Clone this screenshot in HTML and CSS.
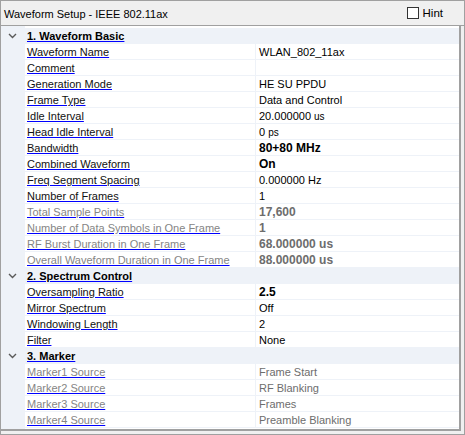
FILE: index.html
```html
<!DOCTYPE html>
<html>
<head>
<meta charset="utf-8">
<link rel="stylesheet" href="styles.css">
</head>
<body>
<div class="window">
  <div class="titlebar">
    <span class="title">Waveform Setup - IEEE 802.11ax</span>
    <label class="hint"><span class="box"></span><span>Hint</span></label>
  </div>
  <div class="grid">
    <div class="row cat"><span class="gut"><svg width="9" height="6" viewBox="0 0 9 6"><polyline points="1,1 4.5,4.5 8,1" fill="none" stroke="#5a5a5a" stroke-width="1.4"/></svg></span><span class="name"><u>1. Waveform Basic</u></span></div>
    <div class="row"><span class="gut"></span><span class="name"><u>Waveform Name</u></span><span class="val">WLAN_802_11ax</span></div>
    <div class="row"><span class="gut"></span><span class="name"><u>Comment</u></span><span class="val"></span></div>
    <div class="row"><span class="gut"></span><span class="name"><u>Generation Mode</u></span><span class="val">HE SU PPDU</span></div>
    <div class="row"><span class="gut"></span><span class="name"><u>Frame Type</u></span><span class="val">Data and Control</span></div>
    <div class="row"><span class="gut"></span><span class="name"><u>Idle Interval</u></span><span class="val">20.000000 <small>us</small></span></div>
    <div class="row"><span class="gut"></span><span class="name"><u>Head Idle Interval</u></span><span class="val">0 <small>ps</small></span></div>
    <div class="row"><span class="gut"></span><span class="name"><u>Bandwidth</u></span><span class="val bold">80+80 MHz</span></div>
    <div class="row"><span class="gut"></span><span class="name"><u>Combined Waveform</u></span><span class="val bold">On</span></div>
    <div class="row"><span class="gut"></span><span class="name"><u>Freq Segment Spacing</u></span><span class="val">0.000000 Hz</span></div>
    <div class="row"><span class="gut"></span><span class="name"><u>Number of Frames</u></span><span class="val">1</span></div>
    <div class="row ro"><span class="gut"></span><span class="name"><u>Total Sample Points</u></span><span class="val bold">17,600</span></div>
    <div class="row ro"><span class="gut"></span><span class="name"><u>Number of Data Symbols in One Frame</u></span><span class="val bold">1</span></div>
    <div class="row ro"><span class="gut"></span><span class="name"><u>RF Burst Duration in One Frame</u></span><span class="val bold">68.000000 us</span></div>
    <div class="row ro"><span class="gut"></span><span class="name"><u>Overall Waveform Duration in One Frame</u></span><span class="val bold">88.000000 us</span></div>
    <div class="row cat"><span class="gut"><svg width="9" height="6" viewBox="0 0 9 6"><polyline points="1,1 4.5,4.5 8,1" fill="none" stroke="#5a5a5a" stroke-width="1.4"/></svg></span><span class="name"><u>2. Spectrum Control</u></span></div>
    <div class="row"><span class="gut"></span><span class="name"><u>Oversampling Ratio</u></span><span class="val bold">2.5</span></div>
    <div class="row"><span class="gut"></span><span class="name"><u>Mirror Spectrum</u></span><span class="val">Off</span></div>
    <div class="row"><span class="gut"></span><span class="name"><u>Windowing Length</u></span><span class="val">2</span></div>
    <div class="row"><span class="gut"></span><span class="name"><u>Filter</u></span><span class="val">None</span></div>
    <div class="row cat"><span class="gut"><svg width="9" height="6" viewBox="0 0 9 6"><polyline points="1,1 4.5,4.5 8,1" fill="none" stroke="#5a5a5a" stroke-width="1.4"/></svg></span><span class="name"><u>3. Marker</u></span></div>
    <div class="row ro"><span class="gut"></span><span class="name"><u>Marker1 Source</u></span><span class="val">Frame Start</span></div>
    <div class="row ro"><span class="gut"></span><span class="name"><u>Marker2 Source</u></span><span class="val">RF Blanking</span></div>
    <div class="row ro"><span class="gut"></span><span class="name"><u>Marker3 Source</u></span><span class="val">Frames</span></div>
    <div class="row ro"><span class="gut"></span><span class="name"><u>Marker4 Source</u></span><span class="val">Preamble Blanking</span></div>
  </div>
</div>
</body>
</html>
```
FILE: styles.css
```css
* { box-sizing: border-box; }
html, body { margin: 0; padding: 0; background: #ffffff; }
body {
  font-family: "Liberation Sans", Arial, sans-serif;
  font-size: 11px;
  color: #000;
}
.window {
  width: 465px;
  height: 435px;
  border: 1px solid #a0a0a0;
  background: #f0f0f0;
  display: flex;
  flex-direction: column;
}
.titlebar {
  height: 25px;
  flex: none;
  border-bottom: 1px solid #a0a0a0;
  display: flex;
  align-items: center;
  justify-content: space-between;
  padding: 0 0 0 3px;
  font-size: 11px;
}
.title { padding-top: 1px; }
.hint {
  display: flex;
  align-items: center;
  gap: 4px;
  margin-right: 21px;
  font-size: 11.5px;
}
.box {
  width: 12px;
  height: 12px;
  border: 1px solid #333;
  background: #fff;
}
.grid {
  flex: none;
  height: 405px;
  margin: 0 3px 3px 0;
  border-right: 2px solid #a0a0a0;
  border-bottom: 2px solid #a0a0a0;
  padding-top: 2px;
  background: linear-gradient(to right, #eef2f8 24px, #ffffff 24px);
}
.row {
  display: flex;
  height: 16px;
  border-bottom: 1px solid #eef2f8;
  line-height: 16px;
}
.gut {
  width: 24px;
  flex: none;
  background: #eef2f8;
  display: flex;
  align-items: center;
  padding-left: 7px;
}
.name {
  width: 231px;
  flex: none;
  padding-left: 2px;
  border-right: 1px solid #eef2f8;
  white-space: nowrap;
  overflow: hidden;
  color: #111;
}
.name u {
  text-decoration: underline;
  text-decoration-color: #0000ff;
  text-underline-offset: 1px;
}
.val {
  flex: 1;
  padding-left: 3px;
  white-space: nowrap;
}
.val small { font-size: 10px; }
.bold { font-weight: bold; font-size: 12px; }
.cat { background: #eef2f8; }
.cat .name { font-weight: bold; color: #000; border-right: none; }
.ro .name { color: #858585; }
.ro .val { color: #6d6d6d; }
```
